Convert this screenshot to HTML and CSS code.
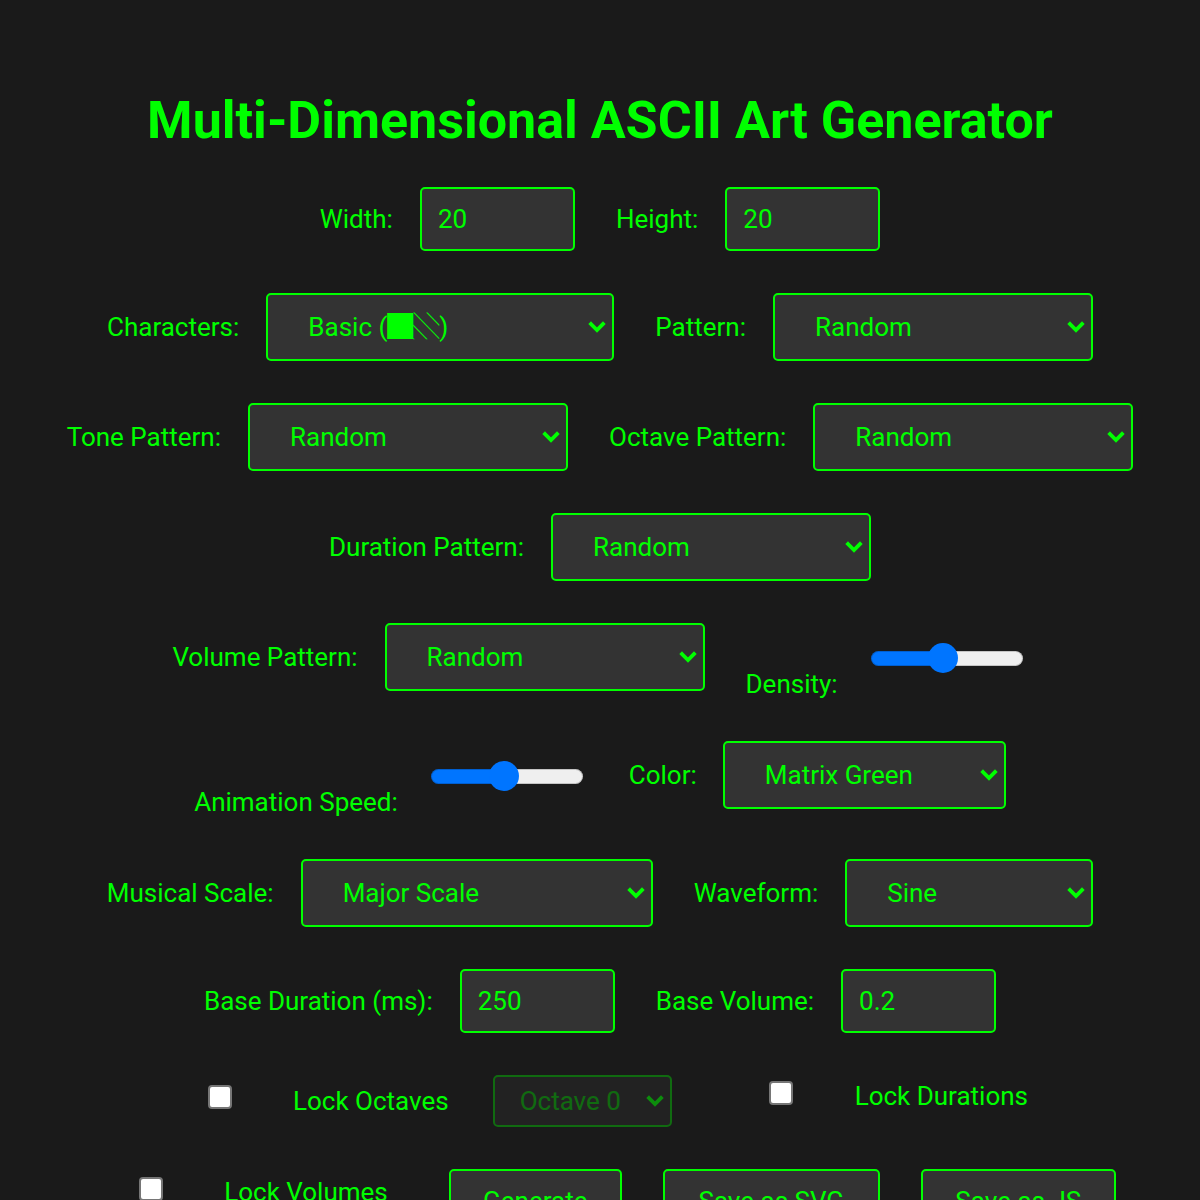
FILE: index.html
```html
<!DOCTYPE html>
<html lang="en">
<head>
<meta charset="utf-8">
<title>Multi-Dimensional ASCII Art Generator</title>
<link rel="stylesheet" href="styles.css">
</head>
<body>
<main class="app">
  <h1 class="title">Multi-Dimensional ASCII Art Generator</h1>

  <div class="row">
    <div class="group"><label class="lbl" for="w">Width:</label><input id="w" class="num" type="number" value="20"></div>
    <div class="group"><label class="lbl" for="h">Height:</label><input id="h" class="num" type="number" value="20"></div>
  </div>

  <div class="row">
    <div class="group"><label class="lbl" for="chars">Characters:</label>
      <span class="select-wrap w348"><select id="chars" class="sel"><option>Basic (█░)</option></select><svg class="chev" viewBox="0 0 18 12" aria-hidden="true"><path d="M3 3 L9 9 L15 3"/></svg></span></div>
    <div class="group"><label class="lbl" for="pat">Pattern:</label>
      <span class="select-wrap w320"><select id="pat" class="sel"><option>Random</option></select><svg class="chev" viewBox="0 0 18 12" aria-hidden="true"><path d="M3 3 L9 9 L15 3"/></svg></span></div>
  </div>

  <div class="row">
    <div class="group"><label class="lbl" for="tone">Tone Pattern:</label>
      <span class="select-wrap w320"><select id="tone" class="sel"><option>Random</option></select><svg class="chev" viewBox="0 0 18 12" aria-hidden="true"><path d="M3 3 L9 9 L15 3"/></svg></span></div>
    <div class="group"><label class="lbl" for="oct">Octave Pattern:</label>
      <span class="select-wrap w320"><select id="oct" class="sel"><option>Random</option></select><svg class="chev" viewBox="0 0 18 12" aria-hidden="true"><path d="M3 3 L9 9 L15 3"/></svg></span></div>
  </div>

  <div class="row">
    <div class="group"><label class="lbl" for="dur">Duration Pattern:</label>
      <span class="select-wrap w320"><select id="dur" class="sel"><option>Random</option></select><svg class="chev" viewBox="0 0 18 12" aria-hidden="true"><path d="M3 3 L9 9 L15 3"/></svg></span></div>
  </div>

  <div class="row top">
    <div class="group"><label class="lbl" for="vol">Volume Pattern:</label>
      <span class="select-wrap w320"><select id="vol" class="sel"><option>Random</option></select><svg class="chev" viewBox="0 0 18 12" aria-hidden="true"><path d="M3 3 L9 9 L15 3"/></svg></span></div>
    <div class="group slider-group"><label class="lbl" for="dens">Density:</label>
      <input id="dens" class="slider" type="range" min="0" max="100" value="47" style="--pct:47%"></div>
  </div>

  <div class="row top">
    <div class="group slider-group"><label class="lbl" for="spd">Animation Speed:</label>
      <input id="spd" class="slider" type="range" min="0" max="100" value="48" style="--pct:49%"></div>
    <div class="group tight"><label class="lbl" for="col">Color:</label>
      <span class="select-wrap w283"><select id="col" class="sel"><option>Matrix Green</option></select><svg class="chev" viewBox="0 0 18 12" aria-hidden="true"><path d="M3 3 L9 9 L15 3"/></svg></span></div>
  </div>

  <div class="row">
    <div class="group"><label class="lbl" for="scale">Musical Scale:</label>
      <span class="select-wrap w352"><select id="scale" class="sel"><option>Major Scale</option></select><svg class="chev" viewBox="0 0 18 12" aria-hidden="true"><path d="M3 3 L9 9 L15 3"/></svg></span></div>
    <div class="group"><label class="lbl" for="wave">Waveform:</label>
      <span class="select-wrap w248"><select id="wave" class="sel"><option>Sine</option></select><svg class="chev" viewBox="0 0 18 12" aria-hidden="true"><path d="M3 3 L9 9 L15 3"/></svg></span></div>
  </div>

  <div class="row">
    <div class="group"><label class="lbl" for="bd">Base Duration (ms):</label><input id="bd" class="num" type="number" value="250"></div>
    <div class="group"><label class="lbl" for="bv">Base Volume:</label><input id="bv" class="num" type="number" value="0.2"></div>
  </div>

  <div class="row locks">
    <div class="lock lock-a">
      <input id="lo" class="check" type="checkbox">
      <label class="lbl" for="lo">Lock Octaves</label>
      <span class="select-wrap w179 small disabled"><select class="sel" disabled><option>Octave 0</option></select><svg class="chev" viewBox="0 0 18 12" aria-hidden="true"><path d="M3 3 L9 9 L15 3"/></svg></span>
    </div>
    <div class="lock lock-b">
      <input id="ld" class="check" type="checkbox">
      <label class="lbl" for="ld">Lock Durations</label>
    </div>
  </div>

  <div class="row actions">
    <div class="lock lock-c">
      <input id="lv" class="check" type="checkbox">
      <label class="lbl" for="lv">Lock Volumes</label>
    </div>
    <button class="btn btn-gen" type="button">Generate</button>
    <button class="btn btn-svg" type="button">Save as SVG</button>
    <button class="btn btn-js" type="button">Save as JS</button>
  </div>
</main>
</body>
</html>
```

FILE: styles.css
```css
* { box-sizing: border-box; }

html, body {
  margin: 0;
  background: #1a1a1a;
}

body {
  font-family: Roboto, "Noto Sans CJK SC", "Liberation Sans", sans-serif;
  color: #00ff00;
}

.app {
  display: flex;
  flex-direction: column;
  gap: 42px;
  padding-top: 90px;
}

.title {
  margin: 0 0 -6px;
  font-size: 52px;
  font-weight: 700;
  line-height: normal;
  text-align: center;
  color: #00ff00;
}

.row {
  display: flex;
  justify-content: center;
  align-items: center;
  gap: 41px;
}

.row.top { align-items: flex-start; }

.group {
  display: flex;
  align-items: center;
  gap: 27px;
}

.group.tight { gap: 26px; }

.lbl {
  font-size: 26px;
  line-height: normal;
  color: #00ff00;
  white-space: nowrap;
}

.num {
  width: 155px;
  height: 64px;
  padding: 0 16px;
  font: 26px Roboto, "Liberation Sans", sans-serif;
  color: #00ff00;
  background: #333333;
  border: 2px solid #00ff00;
  border-radius: 5px;
  appearance: textfield;
  -moz-appearance: textfield;
}
.num::-webkit-inner-spin-button,
.num::-webkit-outer-spin-button { -webkit-appearance: none; margin: 0; }

/* selects with drawn chevron */
.select-wrap {
  position: relative;
  display: inline-flex;
  flex: none;
}
.sel {
  -webkit-appearance: none;
  appearance: none;
  width: 100%;
  height: 68px;
  padding: 0 36px 0 40px;
  font: 26px Roboto, "Noto Sans CJK SC", "Liberation Sans", sans-serif;
  color: #00ff00;
  background-color: #333333;
  border: 2px solid #00ff00;
  border-radius: 5px;
}
.chev {
  position: absolute;
  right: 8px;
  top: 50%;
  width: 18px;
  height: 12px;
  margin-top: -6px;
  fill: none;
  stroke: #00ff00;
  stroke-width: 3.8;
  stroke-linecap: square;
  stroke-linejoin: miter;
  pointer-events: none;
}
.select-wrap.small .sel {
  height: 52px;
  padding-left: 25px;
}
.select-wrap.disabled { opacity: 0.5; }

.w348 { width: 348px; }
.w320 { width: 320px; }
.w283 { width: 283px; }
.w352 { width: 352px; }
.w248 { width: 248px; }
.w179 { width: 179px; }

/* sliders */
.slider-group {
  align-items: flex-end;
  margin-top: 20px;
}
.slider {
  -webkit-appearance: none;
  appearance: none;
  width: 152px;
  height: 30px;
  margin: 0 5px 26px 6px;
  background: transparent;
}
.slider::-webkit-slider-runnable-track {
  height: 15px;
  border-radius: 8px;
  background: linear-gradient(to right, #0075ff var(--pct), #efefef var(--pct));
  box-shadow: inset 0 0 0 1px rgba(0, 0, 0, 0.18);
}
.slider::-webkit-slider-thumb {
  -webkit-appearance: none;
  appearance: none;
  width: 30px;
  height: 30px;
  margin-top: -7.5px;
  border-radius: 50%;
  background: #0075ff;
  border: none;
}

/* locks */
.locks {
  align-items: flex-start;
  gap: 97px;
  padding-left: 36px;
}
.lock {
  display: flex;
  align-items: flex-start;
}
.lock-a { align-items: center; }
.lock-a .check { margin-bottom: 8px; }
.lock-a .select-wrap { margin-left: 44px; }
.lock-b { margin-top: 6px; }
.lock-b .check { margin-right: 62px; }
.lock-c { margin-top: 8px; margin-right: 20px; }

.check {
  -webkit-appearance: none;
  appearance: none;
  width: 24px;
  height: 24px;
  margin: 0 61px 0 0;
  flex: none;
  background: #ffffff;
  border: 2px solid #767676;
  border-radius: 4px;
}

.actions {
  align-items: flex-start;
  padding-left: 55px;
}

.btn {
  height: 64px;
  padding: 0;
  font: 26px Roboto, "Liberation Sans", sans-serif;
  color: #00ff00;
  background: #333333;
  border: 2px solid #00ff00;
  border-radius: 5px;
  text-align: center;
}
.btn-gen { width: 173px; }
.btn-svg { width: 217px; }
.btn-js { width: 195px; }
```
